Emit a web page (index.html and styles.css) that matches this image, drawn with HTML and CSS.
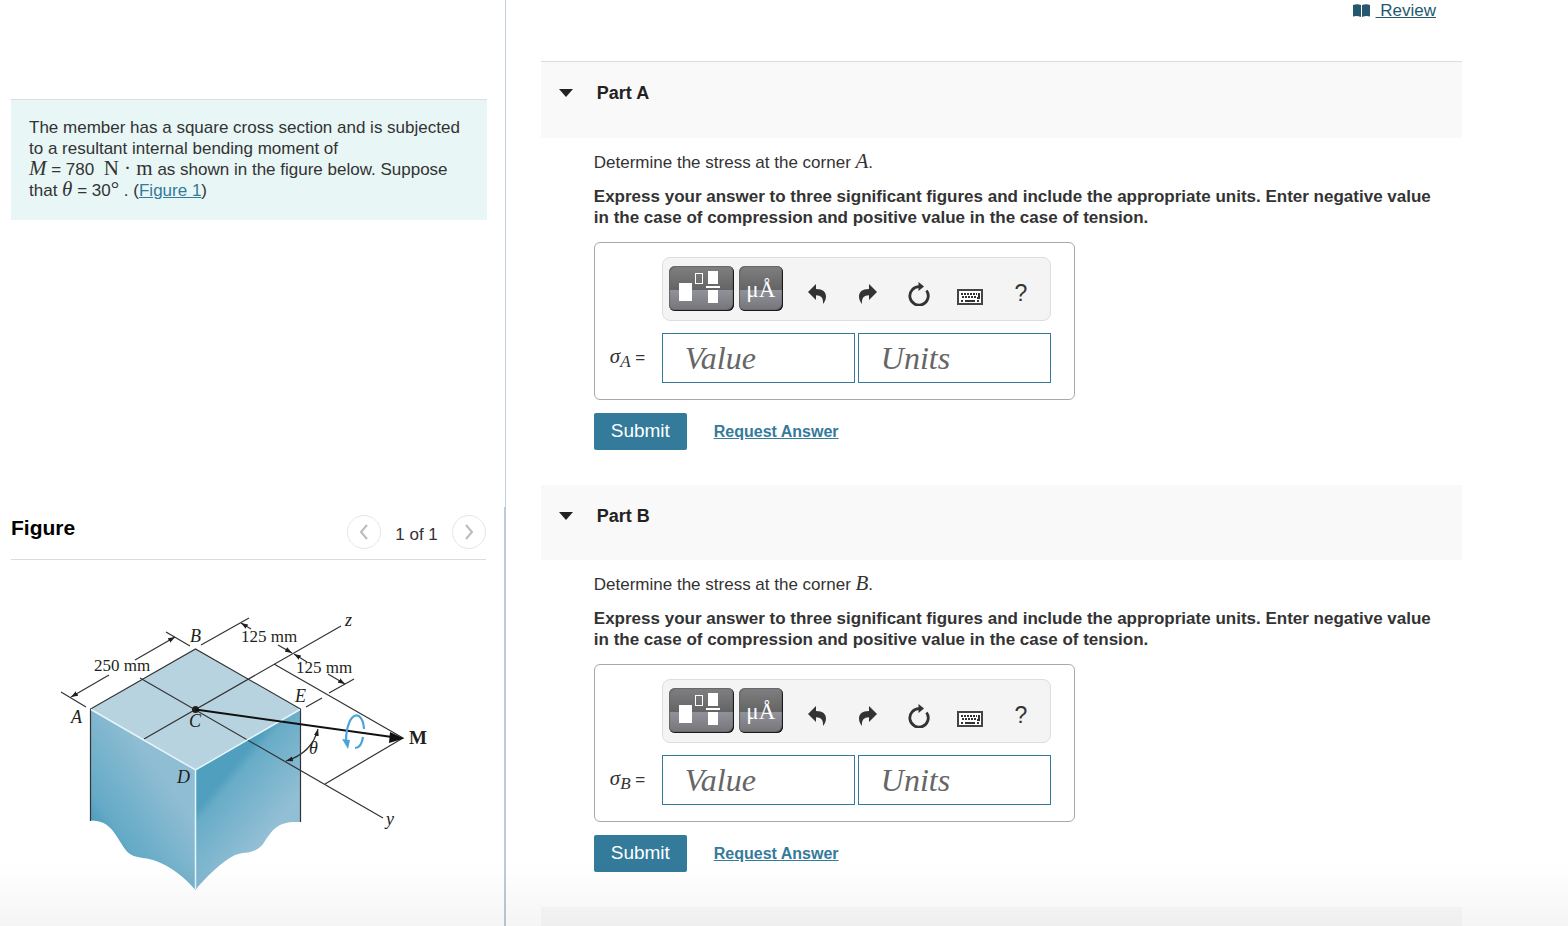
FILE: index.html
```
<!DOCTYPE html>
<html lang="en">
<head>
    <meta charset="UTF-8">
    <meta name="viewport" content="width=device-width, initial-scale=1.0">
    <title>Bending Stress</title>
    <link rel="stylesheet" href="styles.css">
</head>
<body>
    <!-- shared icons -->
    <svg class="sprite" aria-hidden="true">
        <symbol id="icon-template" viewBox="0 0 65 45">
            <rect x="10" y="17" width="13" height="18" fill="#fff"/>
            <rect x="26.5" y="7.5" width="7" height="10" fill="none" stroke="#fff"/>
            <rect x="39" y="5" width="10" height="13" fill="#fff"/>
            <rect x="37" y="20" width="14" height="2" fill="#fff"/>
            <rect x="39" y="24" width="10" height="13" fill="#fff"/>
        </symbol>
        <symbol id="icon-undo" viewBox="0 0 24 24">
            <path d="M3 10L11 2V7C18 7 21 10 21 14.5C21 17.5 19.5 20 18 22C18.5 16 16 13.3 11 13.3V18Z" fill="#333"/>
        </symbol>
        <symbol id="icon-redo" viewBox="0 0 24 24">
            <path d="M21 10L13 2V7C6 7 3 10 3 14.5C3 17.5 4.5 20 6 22C5.5 16 8 13.3 13 13.3V18Z" fill="#333"/>
        </symbol>
        <symbol id="icon-reset" viewBox="0 0 24 24">
            <path d="M12.5 4.7A9.2 9.2 0 1 0 19.5 8.5" fill="none" stroke="#333" stroke-width="2.8"/>
            <path d="M11.5 0L17 4.5L11.5 9Z" fill="#333"/>
        </symbol>
        <symbol id="icon-keyboard" viewBox="0 0 26 24">
            <rect x="1" y="8" width="24" height="14" fill="#fff" stroke="#444" stroke-width="2"/>
            <path d="M4 12H20M5 15H19M4 19H6M20 19H22" stroke="#333" stroke-width="2" stroke-dasharray="2 1"/>
            <path d="M8 19H18M22 11V16H20" fill="none" stroke="#333" stroke-width="2"/>
        </symbol>
    </svg>

    <div class="page">
        <aside class="left">
            <section class="intro">
                <p class="problem">The member has a square cross section and is subjected to a resultant internal bending moment of<br><i class="math">M</i> = 780 &nbsp;<span class="math">N · m</span> as shown in the figure below. Suppose that <i class="math">θ</i> = 30<span class="math">°</span> . (<a href="#figure">Figure 1</a>)</p>
            </section>
            <section class="figure" id="figure">
                <div class="figure-header">
                    <h2>Figure</h2>
                    <div class="pager">
                        <button type="button" aria-label="Previous figure"><svg width="10" height="16" viewBox="0 0 10 16"><path d="M8 1L2 8L8 15"/></svg></button>
                        <span>1 of 1</span>
                        <button type="button" aria-label="Next figure"><svg width="10" height="16" viewBox="0 0 10 16"><path d="M2 1L8 8L2 15"/></svg></button>
                    </div>
                </div>
                <svg class="diagram" viewBox="50 600 390 300" role="img" aria-label="Square member with bending moment M">
                    <defs>
                        <linearGradient id="faceLeft" gradientUnits="userSpaceOnUse" x1="102" y1="838" x2="172" y2="790">
                            <stop offset="0" stop-color="#4b9dbc"/>
                            <stop offset="0.2" stop-color="#64aac6"/>
                            <stop offset="1" stop-color="#8fbdd3"/>
                        </linearGradient>
                        <linearGradient id="faceRight" gradientUnits="userSpaceOnUse" x1="210" y1="760" x2="280" y2="820">
                            <stop offset="0" stop-color="#4f9fbe"/>
                            <stop offset="0.24" stop-color="#509fbe"/>
                            <stop offset="0.34" stop-color="#68acc7"/>
                            <stop offset="1" stop-color="#92bfd5"/>
                        </linearGradient>
                        <marker id="arrow" markerUnits="userSpaceOnUse" markerWidth="8" markerHeight="6" refX="7" refY="3" orient="auto-start-reverse">
                            <path d="M0 0.5L7 3L0 5.5Z" fill="#231f20"/>
                        </marker>
                    </defs>
                    <path d="M90 709L195.5 770V890C184 877 172 867 156 861C143 856 133 860 125 849C115 835 111 820 90 820.5Z" fill="url(#faceLeft)"/>
                    <path d="M300.5 709L195.5 770V890C205 878 221 862 235 855C245 851 254 855 263 844C273 829 277 821 300.5 822Z" fill="url(#faceRight)"/>
                    <path d="M90 709L195.5 649L300.5 709L195.5 770Z" fill="#b8d3e0"/>
                    <g fill="none" stroke="#333" stroke-width="1.2">
                        <path d="M90.5 821V709L195.5 649L300.5 709V822"/>
                        <path d="M140 678L383 818M144 739L341 626M274 664L403 738L325 784"/>
                        <path d="M61 692L86 707M166 632L190 646M201 645L249 618"/>
                        <path d="M306 707L322 698M329 693L354 679"/>
                        <path d="M109 675L71 697" marker-end="url(#arrow)"/>
                        <path d="M135 660L175 637" marker-end="url(#arrow)"/>
                        <path d="M251 629L241 623" marker-end="url(#arrow)"/>
                        <path d="M278 645L292 653" marker-end="url(#arrow)"/>
                        <path d="M307 662L294 654" marker-end="url(#arrow)"/>
                        <path d="M328 674L345 684" marker-end="url(#arrow)"/>
                        <path d="M318 729Q312 753 286 761" marker-start="url(#arrow)" marker-end="url(#arrow)"/>
                    </g>
                    <path d="M91 709.5L195.5 770L300 709.5M195.5 770V889" fill="none" stroke="#e6f5fa" stroke-width="1.5"/>
                    <circle cx="195.5" cy="709.5" r="3.5" fill="#231f20"/>
                    <path d="M195.5 709.5L392 737" stroke="#111" stroke-width="2"/>
                    <path d="M390 732L404 738.5L389 743Z" fill="#111"/>
                    <path d="M364 729C363 709 347 710 346 740M363 737C362 744 359 748 355 748" fill="none" stroke="#4ba3db" stroke-width="2.2"/>
                    <path d="M342 739L350 740L348 749Z" fill="#4ba3db"/>
                    <g class="dims">
                        <text x="94" y="671">250 mm</text>
                        <text x="241" y="642">125 mm</text>
                        <text x="296" y="673">125 mm</text>
                    </g>
                    <g class="points">
                        <text x="190" y="642">B</text>
                        <text x="71" y="723">A</text>
                        <text x="189" y="727">C</text>
                        <text x="177" y="783">D</text>
                        <text x="295" y="702">E</text>
                        <text x="345" y="626">z</text>
                        <text x="386" y="825">y</text>
                        <text x="309" y="754">θ</text>
                    </g>
                    <text class="moment" x="409" y="744">M</text>
                </svg>
            </section>
        </aside>

        <main class="right">
            <div class="topbar">
                <svg width="17" height="13" viewBox="0 0 17 13" aria-hidden="true"><path d="M0 1Q4 -0.5 8 1V13Q4 11.5 0 12.5ZM9 1Q13 -0.5 17 1V12.5Q13 11.5 9 13Z" fill="#25586e"/></svg>
                <a href="#review">&nbsp;Review</a>
            </div>

            <section class="part">
                <h2 class="part-header"><button type="button" aria-expanded="true"><span class="caret"></span>Part A</button></h2>
                <div class="part-body">
                    <p>Determine the stress at the corner <i class="math">A</i>.</p>
                    <p class="instructions">Express your answer to three significant figures and include the appropriate units. Enter negative value in the case of compression and positive value in the case of tension.</p>
                    <div class="answer">
                        <div class="toolbar">
                            <button type="button" class="dark template" aria-label="Templates"><svg width="65" height="45"><use href="#icon-template"/></svg></button>
                            <button type="button" class="dark units">μÅ</button>
                            <div class="tools">
                                <button type="button" aria-label="Undo"><svg width="24" height="24"><use href="#icon-undo"/></svg></button>
                                <button type="button" aria-label="Redo"><svg width="24" height="24"><use href="#icon-redo"/></svg></button>
                                <button type="button" aria-label="Reset"><svg width="24" height="24"><use href="#icon-reset"/></svg></button>
                                <button type="button" aria-label="Keyboard"><svg width="26" height="24"><use href="#icon-keyboard"/></svg></button>
                                <button type="button">?</button>
                            </div>
                        </div>
                        <label for="valueA"><i class="math">σ<sub>A</sub></i> =</label>
                        <div class="fields">
                            <input type="text" id="valueA" placeholder="Value">
                            <input type="text" placeholder="Units" aria-label="Units for part A">
                        </div>
                    </div>
                    <div class="actions">
                        <button type="submit" class="submit">Submit</button>
                        <a href="#answerA">Request Answer</a>
                    </div>
                </div>
            </section>

            <section class="part">
                <h2 class="part-header"><button type="button" aria-expanded="true"><span class="caret"></span>Part B</button></h2>
                <div class="part-body">
                    <p>Determine the stress at the corner <i class="math">B</i>.</p>
                    <p class="instructions">Express your answer to three significant figures and include the appropriate units. Enter negative value in the case of compression and positive value in the case of tension.</p>
                    <div class="answer">
                        <div class="toolbar">
                            <button type="button" class="dark template" aria-label="Templates"><svg width="65" height="45"><use href="#icon-template"/></svg></button>
                            <button type="button" class="dark units">μÅ</button>
                            <div class="tools">
                                <button type="button" aria-label="Undo"><svg width="24" height="24"><use href="#icon-undo"/></svg></button>
                                <button type="button" aria-label="Redo"><svg width="24" height="24"><use href="#icon-redo"/></svg></button>
                                <button type="button" aria-label="Reset"><svg width="24" height="24"><use href="#icon-reset"/></svg></button>
                                <button type="button" aria-label="Keyboard"><svg width="26" height="24"><use href="#icon-keyboard"/></svg></button>
                                <button type="button">?</button>
                            </div>
                        </div>
                        <label for="valueB"><i class="math">σ<sub>B</sub></i> =</label>
                        <div class="fields">
                            <input type="text" id="valueB" placeholder="Value">
                            <input type="text" placeholder="Units" aria-label="Units for part B">
                        </div>
                    </div>
                    <div class="actions">
                        <button type="submit" class="submit">Submit</button>
                        <a href="#answerB">Request Answer</a>
                    </div>
                </div>
            </section>

            <section class="part">
                <div class="part-header"></div>
            </section>
        </main>
    </div>
    <div class="fade"></div>
</body>
</html>
```
FILE: styles.css
```
* {
    box-sizing: border-box;
}
body {
    margin: 0;
    font-family: "Liberation Sans", Arial, sans-serif;
    font-size: 17px;
    line-height: 21px;
    color: #333;
    background: #fff;
}
h2, p {
    margin: 0;
}
a {
    color: #347a9a;
}
button {
    padding: 0;
    border: none;
    background: none;
    font-family: inherit;
    color: inherit;
    cursor: pointer;
}
.sprite {
    display: none;
}
.math {
    font-family: "Liberation Serif", "Times New Roman", serif;
    font-size: 21px;
    line-height: 18px;
}
.page {
    display: grid;
    grid-template-columns: 10fr 21fr;
    height: 100vh;
    overflow: hidden;
}

/* Left side */
.left {
    display: flex;
    flex-direction: column;
}
.intro {
    flex: 0 0 507px;
    padding: 99px 18px 0 11px;
    border-right: 1px solid #c3cfdb;
}
.problem {
    padding: 17px 17px 19px 18px;
    border-top: 1px solid #dadfde;
    background-color: #e8f6f6;
}
.figure {
    flex: 1;
    padding: 8px 18px 0 11px;
    border-right: 2px solid #bccbdb;
}
.figure-header {
    display: flex;
    justify-content: space-between;
    height: 45px;
    border-bottom: 1px solid #dcdcdc;
}
.figure-header h2 {
    padding-top: 2px;
    font-size: 21px;
    color: #000;
}
.pager {
    display: flex;
    gap: 14px;
}
.pager span {
    padding-top: 9px;
}
.pager button {
    display: flex;
    align-items: center;
    justify-content: center;
    width: 34px;
    height: 34px;
    border: 1px solid #e6e6e6;
    border-radius: 50%;
}
.pager path {
    fill: none;
    stroke: #bbb;
    stroke-width: 2;
}
.diagram {
    display: block;
    width: 390px;
    max-width: 100%;
    margin: 40px 0 0 39px;
    font-family: "Liberation Serif", "Times New Roman", serif;
    fill: #231f20;
}
.dims {
    font-size: 17px;
}
.points {
    font-size: 18px;
    font-style: italic;
}
.moment {
    font-size: 19px;
    font-weight: bold;
}

/* Right side */
.right {
    padding: 0 106px 0 35px;
    overflow: hidden;
}
.topbar {
    display: flex;
    justify-content: flex-end;
    gap: 6px;
    height: 61px;
    padding-right: 26px;
}
.topbar svg {
    margin-top: 4px;
}
.topbar a {
    color: #25586e;
}
.part-header {
    height: 75px;
    padding: 20px 18px;
    background-color: #f9f9f9;
    font-size: 18px;
    line-height: 22px;
}
.topbar + .part .part-header {
    height: 77px;
    border-top: 1px solid #dcdcdc;
}
.part-header button {
    display: flex;
    align-items: center;
    gap: 24px;
    font-size: 18px;
    font-weight: bold;
    line-height: 22px;
    color: #222;
}
.caret {
    border-top: 8px solid #222;
    border-left: 7px solid transparent;
    border-right: 7px solid transparent;
}
.part-body {
    padding: 14px 14px 35px 53px;
}
.instructions {
    margin-top: 13px;
    font-weight: bold;
}
.answer {
    display: grid;
    grid-template-columns: 52px 389px;
    grid-template-rows: 64px 50px;
    row-gap: 12px;
    width: fit-content;
    margin-top: 14px;
    padding: 14px 23px 16px 15px;
    border: 1px solid #a9a9a9;
    border-radius: 6px;
}
.toolbar {
    grid-column: 2;
    display: flex;
    gap: 5px;
    padding: 8px 6px;
    border: 1px solid #ddd;
    border-radius: 8px;
    background-color: #f4f4f4;
}
.dark {
    height: 45px;
    border-radius: 6px;
    background: linear-gradient(#808083, #646464 53%, #91919b 54%, #747477);
    box-shadow: inset -1px -1px 1px #111, inset 1px 1px 1px #666;
    color: #fff;
}
.dark svg {
    display: block;
}
.template {
    width: 65px;
}
.units {
    width: 44px;
    padding-top: 2px;
    font-family: "Liberation Serif", "Times New Roman", serif;
    font-size: 23px;
}
.tools {
    display: flex;
    gap: 11px;
    padding: 10px 0 0 9px;
    height: 45px;
}
.tools button {
    display: flex;
    align-items: center;
    justify-content: center;
    width: 40px;
    font-size: 23px;
}
.answer label {
    align-self: center;
    white-space: nowrap;
}
.answer sub {
    font-size: 17px;
    line-height: 16px;
    vertical-align: -4px;
}
.fields {
    display: flex;
    gap: 3px;
}
.fields input {
    flex: 1;
    min-width: 0;
    padding: 0 22px;
    border: 1px solid #347a9a;
    font-family: "Liberation Serif", "Times New Roman", serif;
    font-size: 32px;
    font-style: italic;
}
.fields input::placeholder {
    color: #666;
}
.actions {
    display: flex;
    align-items: center;
    gap: 27px;
    margin-top: 13px;
}
.submit {
    width: 93px;
    height: 37px;
    padding-bottom: 2px;
    border-radius: 2px;
    background-color: #347a9a;
    font-size: 19px;
    color: #fff;
}
.actions a {
    font-size: 16px;
    font-weight: bold;
}

/* soft shade along the bottom of the window */
.fade {
    position: fixed;
    left: 0;
    right: 0;
    bottom: 0;
    height: 64px;
    background: linear-gradient(rgba(0, 0, 0, 0), rgba(0, 0, 0, 0.04));
    pointer-events: none;
}
```
